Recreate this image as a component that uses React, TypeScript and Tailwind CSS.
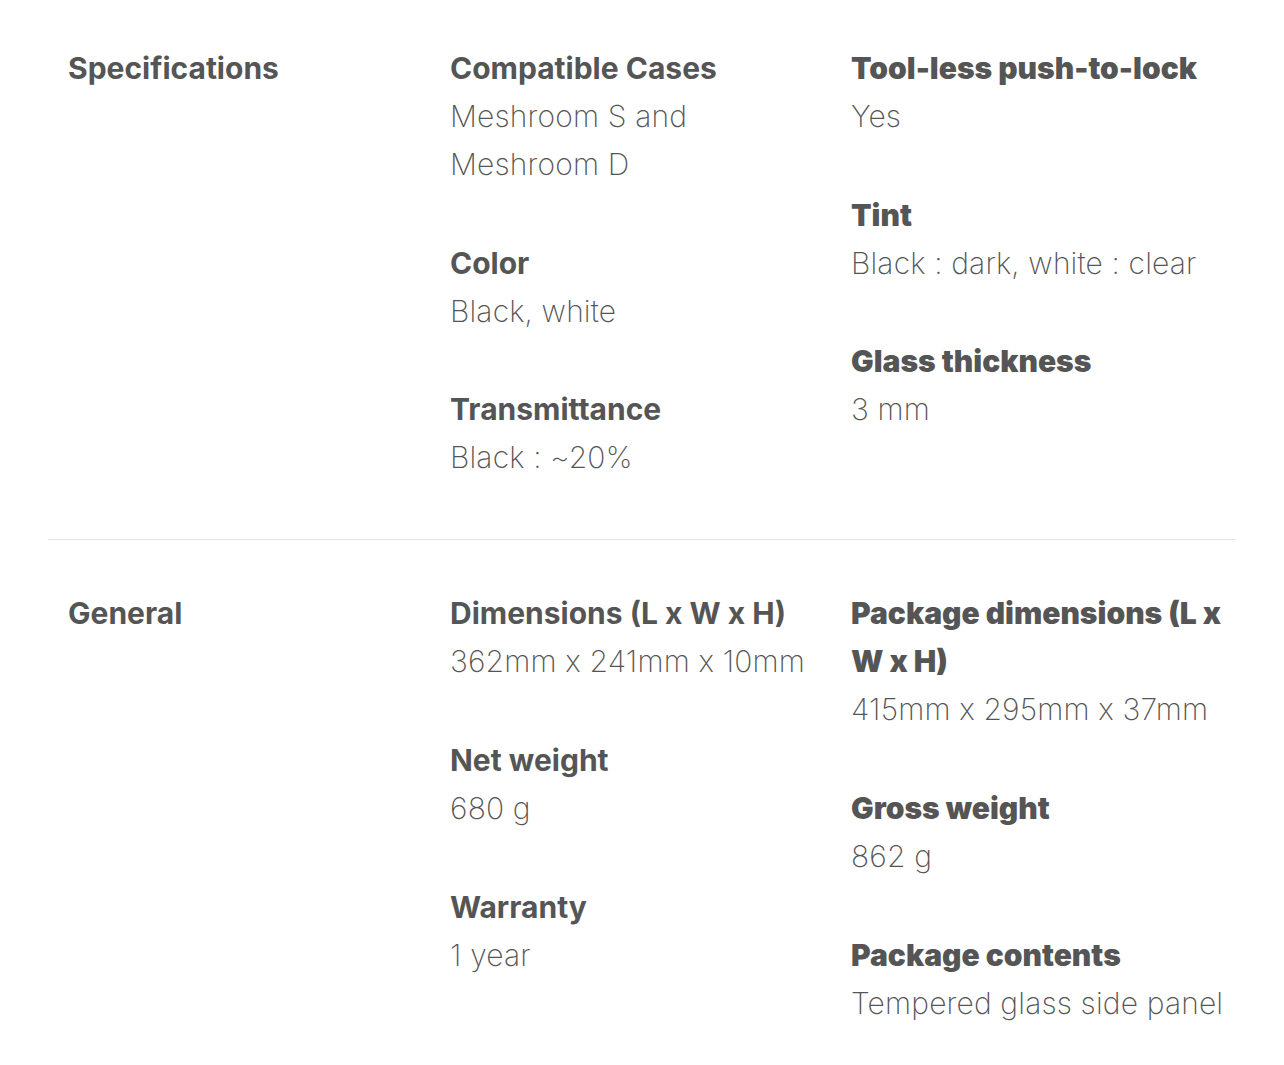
export default function App() {
  const sections = [
    {
      title: "Specifications",
      left: [
        { label: "Compatible Cases", value: "Meshroom S and Meshroom D" },
        { label: "Color", value: "Black, white" },
        { label: "Transmittance", value: "Black : ~20%" },
      ],
      right: [
        { label: "Tool-less push-to-lock", value: "Yes" },
        { label: "Tint", value: "Black : dark, white : clear" },
        { label: "Glass thickness", value: "3 mm" },
      ],
    },
    {
      title: "General",
      left: [
        { label: "Dimensions (L x W x H)", value: "362mm x 241mm x 10mm" },
        { label: "Net weight", value: "680 g" },
        { label: "Warranty", value: "1 year" },
      ],
      right: [
        { label: "Package dimensions (L x W x H)", value: "415mm x 295mm x 37mm" },
        { label: "Gross weight", value: "862 g" },
        { label: "Package contents", value: "Tempered glass side panel" },
      ],
    },
  ]

  return (
    <div className="min-h-screen bg-white px-12 text-[#555555] font-['Inter',sans-serif] text-[30px] leading-[48px]">
      {sections.map((section, i) => (
        <div
          key={section.title}
          className={`grid grid-cols-[366px_1fr_1fr] gap-x-4 pl-5 ${
            i === 0 ? "pt-[44px] pb-[58px] border-b border-[#e5e5e5]" : "pt-[49px] pb-10"
          }`}
        >
          <h2 className="font-bold">{section.title}</h2>
          <div className="flex flex-col gap-[50.7px]">
            {section.left.map((item) => (
              <div key={item.label}>
                <p className="font-bold">{item.label}</p>
                <p className="font-extralight tracking-[0.15px]">{item.value}</p>
              </div>
            ))}
          </div>
          <div className="flex flex-col gap-[50.7px]">
            {section.right.map((item) => (
              <div key={item.label}>
                <p className="font-black">{item.label}</p>
                <p className="font-extralight tracking-[0.15px]">{item.value}</p>
              </div>
            ))}
          </div>
        </div>
      ))}
    </div>
  )
}
